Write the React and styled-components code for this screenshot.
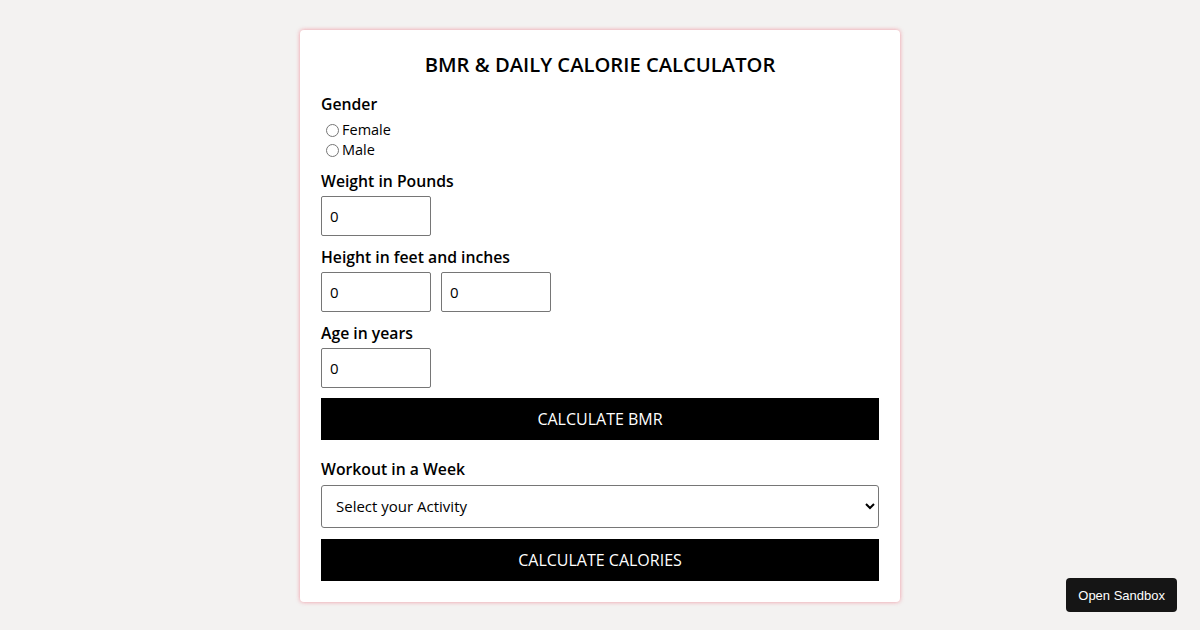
import React from "react";
import styled, { createGlobalStyle } from "styled-components";

const Global = createGlobalStyle`
  html, body { margin: 0; padding: 0; background: #f3f2f1; }
  body { font-family: "Open Sans", sans-serif; color: #000; }
  * { box-sizing: border-box; }
`;

const Page = styled.div`
  min-height: 630px;
  display: flex;
  justify-content: center;
  align-items: flex-start;
  padding-top: 30px;
`;

const Card = styled.div`
  width: 600px;
  background: #fff;
  border-radius: 4px;
  box-shadow: 0 0 4px rgba(240, 110, 125, 0.7);
  padding: 19px 21px 21px;
  display: flex;
  flex-direction: column;
`;

const Title = styled.h1`
  margin: 0 0 13px;
  font-size: 20.2px;
  line-height: 30px;
  font-weight: 600;
  text-align: center;
`;

const Field = styled.div`
  display: flex;
  flex-direction: column;
  margin-bottom: ${(p) => p.$mb ?? 9}px;
`;

const Label = styled.label`
  font-size: 15.75px;
  font-weight: 600;
  line-height: 24px;
  margin-bottom: ${(p) => p.$mb ?? 3}px;
`;

const RadioRow = styled.label`
  display: flex;
  align-items: center;
  font-size: 14.5px;
  line-height: 20px;
  height: 20px;
  input {
    margin: 1px 3px 0 5px;
    width: 13px;
    height: 13px;
  }
`;

const Row = styled.div`
  display: flex;
  gap: 10px;
`;

const Input = styled.input`
  width: 110px;
  height: 40px;
  border: 1px solid #767676;
  border-radius: 2px;
  padding: 0 8px;
  font-family: "Open Sans", sans-serif;
  font-size: 15px;
  color: #000;
`;

const Button = styled.button`
  width: 100%;
  height: 42px;
  background: #000;
  color: #fff;
  border: none;
  font-family: "Open Sans", sans-serif;
  font-size: 16px;
  text-transform: uppercase;
  margin-bottom: ${(p) => p.$mb ?? 0}px;
  cursor: pointer;
`;

const Select = styled.select`
  width: 100%;
  height: 43px;
  border: 1px solid #767676;
  border-radius: 3px;
  padding: 0 10px 2px;
  font-family: "Open Sans", sans-serif;
  font-size: 15px;
  color: #000;
  background: #fff;
  margin-bottom: 11px;
`;

const Sandbox = styled.button`
  position: fixed;
  right: 23px;
  bottom: 18px;
  height: 34px;
  padding: 0 12px;
  background: #151515;
  color: #fff;
  border: none;
  border-radius: 4px;
  font-family: "Liberation Sans", Arial, sans-serif;
  font-size: 13px;
`;

export default function App() {
  return (
    <>
      <Global />
      <Page>
        <Card>
          <Title>BMR &amp; DAILY CALORIE CALCULATOR</Title>
          <Field>
            <Label $mb={4}>Gender</Label>
            <RadioRow>
              <input type="radio" name="g" />
              Female
            </RadioRow>
            <RadioRow>
              <input type="radio" name="g" />
              Male
            </RadioRow>
          </Field>
          <Field>
            <Label>Weight in Pounds</Label>
            <Input defaultValue="0" />
          </Field>
          <Field>
            <Label>Height in feet and inches</Label>
            <Row>
              <Input defaultValue="0" />
              <Input defaultValue="0" />
            </Row>
          </Field>
          <Field $mb={10}>
            <Label>Age in years</Label>
            <Input defaultValue="0" />
          </Field>
          <Button $mb={17}>Calculate BMR</Button>
          <Field $mb={0}>
            <Label $mb={4}>Workout in a Week</Label>
            <Select defaultValue="">
              <option value="">Select your Activity</option>
              <option>Sedentary</option>
              <option>Light exercise (1-3 days)</option>
              <option>Moderate exercise (3-5 days)</option>
              <option>Heavy exercise (6-7 days)</option>
            </Select>
          </Field>
          <Button>Calculate Calories</Button>
        </Card>
      </Page>
      <Sandbox>Open Sandbox</Sandbox>
    </>
  );
}
